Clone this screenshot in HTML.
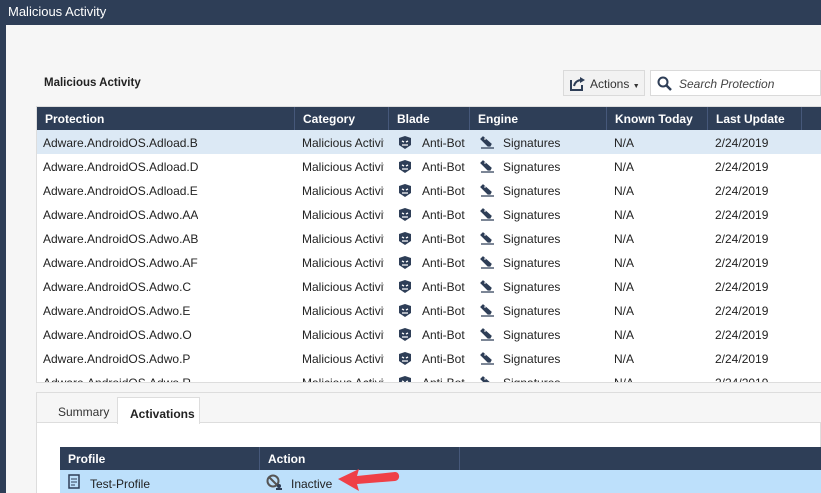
<!DOCTYPE html>
<html><head><meta charset="utf-8"><style>
*{margin:0;padding:0;box-sizing:border-box}
body{width:821px;height:493px;overflow:hidden;background:#f6f6f6;font-family:"Liberation Sans",sans-serif;font-size:12px;color:#222;position:relative}
.abs{position:absolute}
.title{left:0;top:0;width:821px;height:25px;background:#2e3e57;color:#fff;font-size:13px;padding:4px 8px}
.lstrip{left:0;top:25px;width:6px;height:468px;background:#2e3e57}
.hdr{background:#2e3e57;color:#fff;font-weight:bold}
.hdr div{position:absolute;top:0;height:100%;border-right:1px solid #46587a;padding-left:8px;line-height:24px}
.row{position:absolute;left:37px;width:784px;height:24px;background:#fff}
.row span{position:absolute;top:6px;white-space:nowrap;overflow:hidden}
.sel{background:#dce9f5}
</style></head><body>
<div class="abs title">Malicious Activity</div>
<div class="abs lstrip"></div>
<div class="abs" style="left:44px;top:77px;font-weight:bold;font-size:11.5px">Malicious Activity</div>
<div class="abs" style="left:563px;top:70px;width:82px;height:26px;border:1px solid #dadada;background:#f2f2f2">
<svg class="abs" style="left:6px;top:5px" width="16" height="15" viewBox="0 0 16 15"><path d="M1 4v10h11V9" fill="none" stroke="#2e3e57" stroke-width="2"/><path d="M4 10c1-4 4-6 8-6" fill="none" stroke="#2e3e57" stroke-width="2"/><path d="M10 1l5 3-5 3z" fill="#2e3e57"/></svg>
<span class="abs" style="left:26px;top:6px;color:#333">Actions <span style="font-size:7px">▼</span></span></div>
<div class="abs" style="left:650px;top:70px;width:171px;height:26px;border:1px solid #dadada;background:#fff">
<svg class="abs" style="left:6px;top:5px" width="16" height="16"><circle cx="6" cy="6" r="4.5" fill="none" stroke="#2e3e57" stroke-width="2"/><path d="M9 9l5 5" stroke="#2e3e57" stroke-width="2.5"/></svg>
<span class="abs" style="left:28px;top:6px;font-style:italic;color:#444">Search Protection</span></div>
<div class="abs" style="left:36px;top:106px;width:785px;height:277px;background:#fff;border:1px solid #ddd"></div>
<div class="abs hdr" style="left:37px;top:107px;width:784px;height:23px">
<div style="left:0;width:258px">Protection</div><div style="left:258px;width:94px">Category</div><div style="left:352px;width:81px">Blade</div><div style="left:433px;width:137px">Engine</div><div style="left:570px;width:101px">Known Today</div><div style="left:671px;width:94px">Last Update</div></div>
<div id="rows"></div>
<div class="abs" style="left:36px;top:392px;width:785px;height:101px;background:#fff;border:1px solid #ddd;border-bottom:none"></div>
<div class="abs" style="left:37px;top:393px;width:784px;height:30px;background:#f6f6f6;border-bottom:1px solid #ddd"></div>
<div class="abs" style="left:58px;top:405px;color:#333">Summary</div>
<div class="abs" style="left:117px;top:397px;width:83px;height:27px;background:#fff;border:1px solid #ddd;border-bottom:none;font-weight:bold;padding:9px 0 0 12px">Activations</div>
<div class="abs hdr" style="left:60px;top:447px;width:761px;height:23px">
<div style="left:0;width:200px">Profile</div><div style="left:200px;width:200px">Action</div></div>
<div class="abs" style="left:60px;top:470px;width:761px;height:23px;background:#bde0fb"></div>
<svg class="abs" style="left:68px;top:474px" width="12" height="15"><rect x="1" y="1" width="10" height="13" fill="none" stroke="#2e3e57" stroke-width="1.5"/><path d="M3 5h6M3 8h6M3 11h4" stroke="#2e3e57"/></svg>
<span class="abs" style="left:90px;top:477px">Test-Profile</span>
<svg class="abs" style="left:266px;top:474px" width="18" height="16"><circle cx="7" cy="7" r="5.5" fill="none" stroke="#555" stroke-width="2"/><path d="M3 3l8 8" stroke="#555" stroke-width="2"/><circle cx="13" cy="12" r="2" fill="#2e3e57"/><rect x="10" y="14" width="6" height="2" fill="#2e3e57"/></svg>
<span class="abs" style="left:291px;top:477px">Inactive</span>
<svg class="abs" style="left:334px;top:466px" width="70" height="27"><path d="M4 13L25 3l-2 7 38-4c5 0 6 8 0 9L23 18l2 7z" fill="#ef4047"/></svg>
<script>
var n=["Adload.B","Adload.D","Adload.E","Adwo.AA","Adwo.AB","Adwo.AF","Adwo.C","Adwo.E","Adwo.O","Adwo.P","Adwo.R"],h="";
var bot='<svg style="position:absolute;left:361px;top:5px" width="14" height="15"><path d="M1 3l6-2 6 2v7l-6 4-6-4z" fill="#2e3e57"/><path d="M4 6l2 1M10 6l-2 1M4 10h6" stroke="#fff" stroke-width="1.3"/></svg>';
var eng='<svg style="position:absolute;left:442px;top:5px" width="17" height="15"><path d="M2 13h13M4 2l8 7-1 2-2 0-7-7z" fill="#2e3e57" stroke="#2e3e57" stroke-width="1.3"/><path d="M5 4l2 0" stroke="#fff"/></svg>';
n.forEach(function(s,i){var t=130+i*24;h+='<div class="row'+(i==0?' sel':'')+'" style="top:'+t+'px;height:'+(i==10?12:24)+'px;overflow:hidden"><span style="left:6px">Adware.AndroidOS.'+s+'</span><span style="left:265px;width:82px">Malicious Activity</span>'+bot+'<span style="left:385px">Anti-Bot</span>'+eng+'<span style="left:466px">Signatures</span><span style="left:577px">N/A</span><span style="left:678px">2/24/2019</span></div>'});
document.getElementById("rows").innerHTML=h;
</script>
</body></html>
